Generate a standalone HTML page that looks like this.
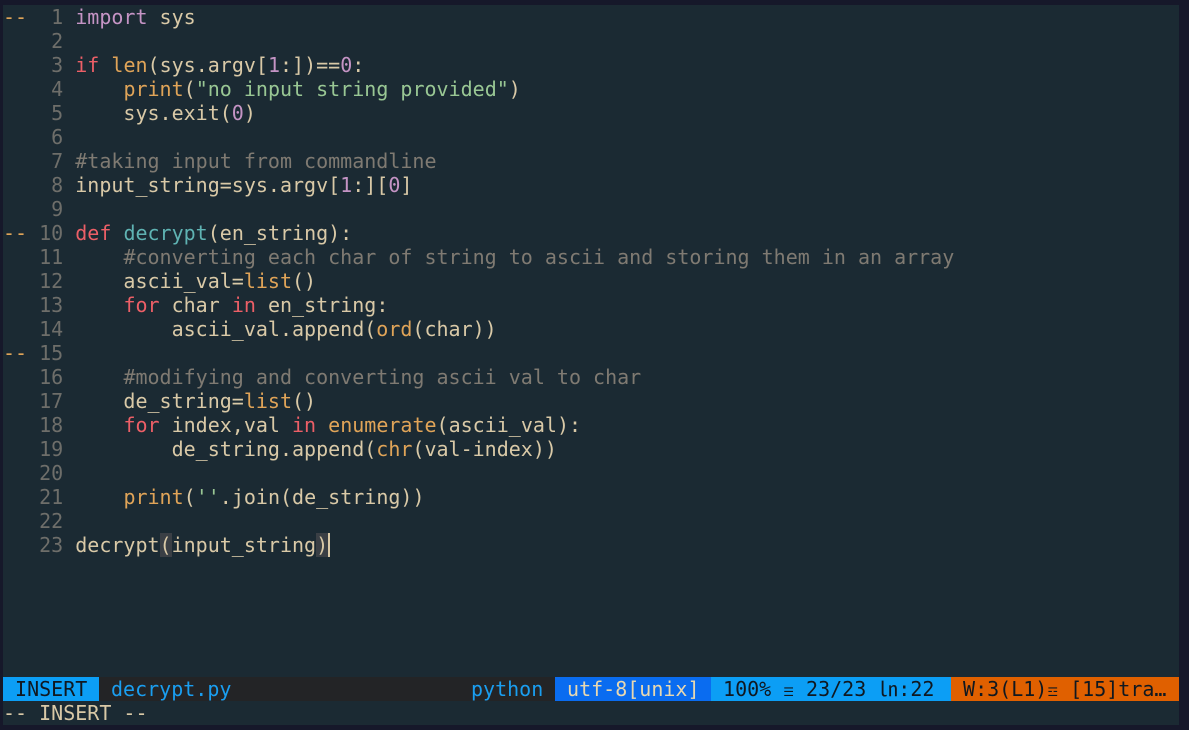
<!DOCTYPE html>
<html><head><meta charset="utf-8"><style>
html,body{margin:0;padding:0;background:#16182a;width:1189px;height:730px;overflow:hidden}
#w{position:absolute;left:3px;top:5px;width:1176px;height:720px;background:#1b2a33}
pre{margin:0;font-family:"DejaVu Sans Mono","Liberation Mono",monospace;font-size:20px;line-height:24px;color:#d9c9a7;white-space:pre}
.n{color:#6e6e6a}.d{color:#e0a458}.k{color:#ec5f67}.i{color:#c594c5}.f{color:#e0a458}.s{color:#99c794}.c{color:#7f7a72}.p{color:#c594c5}.t{color:#5fb3b3}
#st{position:absolute;left:0;top:672px;height:24px;width:1176px;background:#232426}
#st span{position:absolute;top:0;height:24px}
</style></head><body><div id="w">
<pre><span class="d">--</span><span class="n">  1</span> <span class="i">import</span> sys
<span class="n">    2</span>
<span class="n">    3</span> <span class="k">if</span> <span class="f">len</span>(sys.argv[<span class="p">1</span>:])==<span class="p">0</span>:
<span class="n">    4</span>     <span class="f">print</span>(<span class="s">"no input string provided"</span>)
<span class="n">    5</span>     sys.exit(<span class="p">0</span>)
<span class="n">    6</span>
<span class="n">    7</span> <span class="c">#taking input from commandline</span>
<span class="n">    8</span> input_string=sys.argv[<span class="p">1</span>:][<span class="p">0</span>]
<span class="n">    9</span>
<span class="d">--</span><span class="n"> 10</span> <span class="k">def</span> <span class="t">decrypt</span>(en_string):
<span class="n">   11</span>     <span class="c">#converting each char of string to ascii and storing them in an array</span>
<span class="n">   12</span>     ascii_val=<span class="f">list</span>()
<span class="n">   13</span>     <span class="k">for</span> char <span class="k">in</span> en_string:
<span class="n">   14</span>         ascii_val.append(<span class="f">ord</span>(char))
<span class="d">--</span><span class="n"> 15</span>
<span class="n">   16</span>     <span class="c">#modifying and converting ascii val to char</span>
<span class="n">   17</span>     de_string=<span class="f">list</span>()
<span class="n">   18</span>     <span class="k">for</span> index,val <span class="k">in</span> <span class="f">enumerate</span>(ascii_val):
<span class="n">   19</span>         de_string.append(<span class="f">chr</span>(val-index))
<span class="n">   20</span>
<span class="n">   21</span>     <span class="f">print</span>(<span class="s">''</span>.join(de_string))
<span class="n">   22</span>
<span class="n">   23</span> decrypt<span style="background:#3a3f45">(</span>input_string<span style="background:#3a3f45">)</span><span style="border-left:2px solid #d9c9a7"></span></pre>
<pre id="st"><span style="left:0;width:96px;background:#0c9ef5;color:#101820"> INSERT </span><span style="left:108px;color:#1a9ef0">decrypt.py</span><span style="left:468px;color:#1a9ef0">python</span><span style="left:552px;width:156px;background:#0a6cf0;color:#e8d8b0"> utf-8[unix] </span><span style="left:708px;width:240px;background:#0c9ef5;color:#101820"> 100% <span style="position:static;font-size:12px">☰</span> 23/23 ㏑:22 </span><span style="left:948px;width:228px;background:#e06000;color:#101820"> W:3(L1)<span style="position:static;font-size:12px">☲</span> [15]tra…</span></pre>
<pre style="position:absolute;left:0;top:696px">-- INSERT --</pre>
</div></body></html>
